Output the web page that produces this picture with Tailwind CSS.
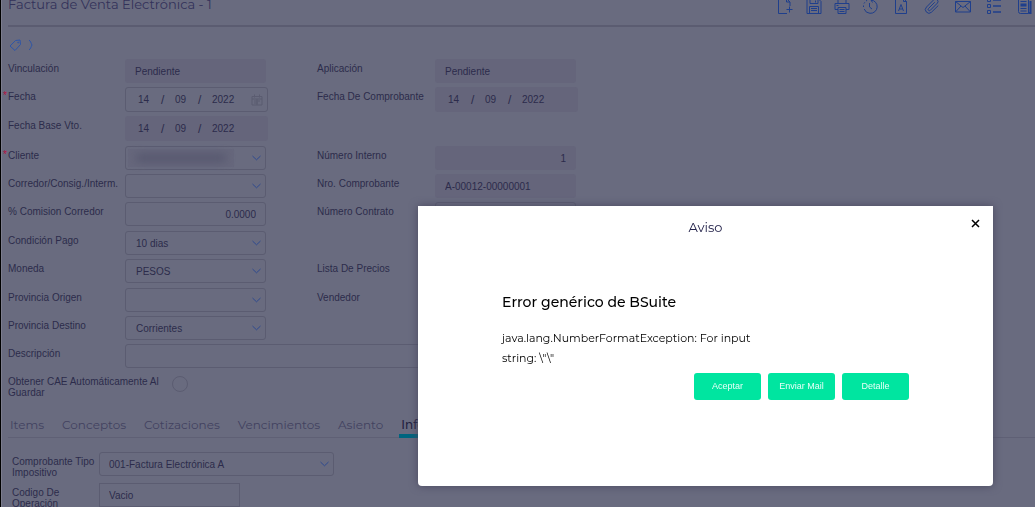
<!doctype html>
<html lang="es">
  <head>
    <meta charset="UTF-8" />
    <meta name="viewport" content="width=device-width, initial-scale=1.0" />
    <title>Factura de Venta Electrónica</title>
    <script src="https://cdn.jsdelivr.net/npm/@tailwindcss/browser@4"></script>
  </head>

  <body class="h-svh overflow-hidden bg-[#696b7f] font-['Liberation_Sans',Arial,sans-serif] text-[10px] text-[#2c2b4b]">
    <div class="min-h-svh border-l border-black">
      <div class="min-h-svh border-l border-[#7c7d8e] pl-[6px]">
        <!-- Header -->
        <header class="-mt-[14px] flex h-[41px] items-center justify-between border-b-2 border-[#5b5c71] pr-[2px]">
          <h1 class="-mt-1 font-[Montserrat,Inter,sans-serif] text-[13px] leading-4 text-[#33325a]">Factura de Venta Electrónica - 1</h1>
          <div class="flex gap-[15px] text-[#1f3f8c]">
            <div class="flex gap-3">
              <button type="button" aria-label="Nuevo">
                <svg class="size-4" viewBox="0 0 16 16" fill="none" stroke="currentColor"><path d="M9 15.500H.5V.5h8l3.500 3.500v4M8.500.5V4H12M11.500 8.500v6M8.500 11.500h6" /></svg>
              </button>
              <button type="button" aria-label="Guardar">
                <svg class="size-4" viewBox="0 0 16 16" fill="none" stroke="currentColor"><path d="M1 1.500h12l2 2v12H1zM4 1.500v4h8v-4M9.500 2.500v2M3.500 15.500v-7h9v7M5 10.500h6M5 12.500h6" /></svg>
              </button>
              <button type="button" aria-label="Imprimir">
                <svg class="size-4" viewBox="0 0 16 16" fill="none" stroke="currentColor"><path d="M4 5.500v-5h8v5M4 11.500H1v-6h14v6h-3M4 9.500h8v6H4zM2.500 7.500h2M5.500 11.500h5M5.500 13.500h5" /></svg>
              </button>
              <button type="button" aria-label="Historial">
                <svg class="size-4" viewBox="0 0 16 16" fill="none" stroke="currentColor"><path d="M9 2a6.500 6.500 0 0 1-1 13.300A6.500 6.500 0 0 1 2.200 11" /><path d="M11.500.5 9 2l1.500 2.500M7.500 5v4l2.500 2M1.500 9V7.500M2 5.500l.8-1.200M4 3l1.200-.8" /></svg>
              </button>
            </div>
            <button type="button" aria-label="Documento">
              <svg class="size-4" viewBox="0 0 16 16" fill="none" stroke="currentColor"><path d="M2.500.5h8l3 3v12h-11zM10.500.5v3h3M5.500 13 8 6.500l2.500 6.500M6.500 11h3" /></svg>
            </button>
            <button type="button" aria-label="Adjuntar">
              <svg class="size-4" viewBox="0 0 16 16" fill="none" stroke="currentColor" stroke-linecap="round"><path d="m10.500 4.500-6 6a1.200 1.200 0 0 0 1.800 1.800l7.200-7.300A2.500 2.500 0 0 0 10 1.500L2.500 9a3.600 3.600 0 0 0 5 5.200L14 7.800" /></svg>
            </button>
            <button type="button" aria-label="Enviar mail">
              <svg class="size-4" viewBox="0 0 16 16" fill="none" stroke="currentColor"><path d="M.5 3.500h15v10.500H.5zM.5 3.500 8 9.500l7.500-6M.5 14 6 8M15.500 14 10 8" /></svg>
            </button>
            <button type="button" aria-label="Lista">
              <svg class="size-4" viewBox="0 0 16 16" fill="none" stroke="currentColor"><path d="M1.500.5h3v3h-3zM1.500 6.500h3v3h-3zM1.500 12.500h3v3h-3z" /><path stroke-width="1.500" d="M7 2h8M7 8h8M7 14h8" /></svg>
            </button>
            <button type="button" aria-label="Novedades">
              <svg class="size-4" viewBox="0 0 16 16" fill="none" stroke="currentColor"><path d="M1.500.5h10v15h-8a2 2 0 0 1-2-2zM3.500 3.500h6M3.500 10.500h6M3.500 13h6" /><path stroke-width="3" d="M3.500 7h6" /><path stroke-width="2" d="M13.500 3v12h-2" /></svg>
            </button>
          </div>
        </header>

        <div class="flex h-8 items-center gap-2 pt-1 text-[#2d55a8]">
          <button type="button" aria-label="Etiqueta">
            <svg class="size-[14px]" viewBox="0 0 14 14" fill="none" stroke="currentColor"><path d="M7.500 2.500 12 2l.5 4.500L7 12.500 2 8z" /><circle cx="10.200" cy="4.500" r=".5" /></svg>
          </button>
          <button type="button" aria-label="Expandir">
            <svg class="-ml-[2px] h-3 w-2" viewBox="0 0 8 12" fill="none" stroke="currentColor"><path d="M1 1c1.500 1 2 3 3 5-1 2-1.500 4-3 5" /></svg>
          </button>
        </div>

        <form class="flex flex-col gap-[5px]">
          <!-- Fechas -->
          <div class="flex flex-col gap-1">
            <div class="grid grid-cols-[117px_141px_51px_118px_141px] items-start">
              <label for="vinculacion" class="pt-1 leading-[11px]">Vinculación</label>
              <input id="vinculacion" value="Pendiente" readonly class="h-6 w-full rounded-[3px] bg-[#65657b] px-[10px]" />
              <label for="aplicacion" class="col-start-4 pt-1 leading-[11px]">Aplicación</label>
              <input id="aplicacion" value="Pendiente" readonly class="h-6 w-full rounded-[3px] bg-[#65657b] px-[10px]" />
            </div>
            <div class="grid grid-cols-[117px_143px_49px_118px_143px] items-start">
              <label for="fecha" class="relative pt-1 leading-[11px]"><span class="absolute top-[3px] -left-[5px] text-[#b3123f]">*</span>Fecha</label>
              <div class="flex h-[25px] items-center gap-[11px] rounded-[3px] border border-[#5b5c71] pl-3">
                <input id="fecha" value="14" class="w-3" />
                <span class="w-[3px] text-[12px]">/</span>
                <input aria-label="Mes" value="09" class="w-3" />
                <span class="w-[3px] text-[12px]">/</span>
                <input aria-label="Año" value="2022" class="w-6" />
                <svg class="ml-1 size-3 text-[#5b5c71]" viewBox="0 0 12 12" fill="none" stroke="currentColor"><path d="M1 2.500h10v8.500H1zM1 5h10M3.500.5v3M8.500.5v3M3 7h6M3 9h4M6 5v6" /></svg>
              </div>
              <label for="fecha-comp" class="col-start-4 pt-1 leading-[11px]">Fecha De Comprobante</label>
              <div class="flex h-[25px] items-center gap-[11px] rounded-[3px] bg-[#65657b] pl-[13px]">
                <input id="fecha-comp" value="14" readonly class="w-3" />
                <span class="w-[3px] text-[12px]">/</span>
                <input aria-label="Mes" value="09" readonly class="w-3" />
                <span class="w-[3px] text-[12px]">/</span>
                <input aria-label="Año" value="2022" readonly class="w-6" />
              </div>
            </div>
            <div class="grid grid-cols-[117px_143px] items-start">
              <label for="fecha-base" class="pt-1 leading-[11px]">Fecha Base Vto.</label>
              <div class="flex h-[25px] items-center gap-[11px] rounded-[3px] bg-[#65657b] pl-[13px]">
                <input id="fecha-base" value="14" readonly class="w-3" />
                <span class="w-[3px] text-[12px]">/</span>
                <input aria-label="Mes" value="09" readonly class="w-3" />
                <span class="w-[3px] text-[12px]">/</span>
                <input aria-label="Año" value="2022" readonly class="w-6" />
              </div>
            </div>
          </div>

          <!-- Cliente y comprobante -->
          <div class="flex flex-col gap-1">
            <div class="grid grid-cols-[117px_141px_51px_118px_141px] items-start">
              <label for="cliente" class="relative pt-1 leading-[11px]"><span class="absolute top-[3px] -left-[5px] text-[#b3123f]">*</span>Cliente</label>
              <div class="relative">
                <select id="cliente" class="h-6 w-full appearance-none rounded-[3px] border border-[#5b5c71] px-[10px]"><option></option></select>
                <div class="pointer-events-none absolute top-[3px] left-[3px] flex h-[18px] w-[106px] items-center bg-[#66677c] pl-2">
                  <div class="h-2 w-[90px] rounded-full bg-[#56576e] blur-xs"></div>
                </div>
                <svg class="pointer-events-none absolute top-[9px] right-[5px] h-[6px] w-[9px] text-[#2f4a8f]" viewBox="0 0 9 6" fill="none" stroke="currentColor"><path d="m.5 1 4 3.800 4-3.800" /></svg>
              </div>
              <label for="nro-interno" class="col-start-4 pt-1 leading-[11px]">Número Interno</label>
              <input id="nro-interno" value="1" readonly class="h-6 w-full rounded-[3px] bg-[#65657b] px-[10px] text-right" />
            </div>
            <div class="grid grid-cols-[117px_141px_51px_118px_141px] items-start">
              <label for="corredor" class="pt-1 leading-[11px] whitespace-nowrap">Corredor/Consig./Interm.</label>
              <div class="relative">
                <select id="corredor" class="h-6 w-full appearance-none rounded-[3px] border border-[#5b5c71] px-[10px]"><option></option></select>
                <svg class="pointer-events-none absolute top-[9px] right-[5px] h-[6px] w-[9px] text-[#2f4a8f]" viewBox="0 0 9 6" fill="none" stroke="currentColor"><path d="m.5 1 4 3.800 4-3.800" /></svg>
              </div>
              <label for="nro-comp" class="col-start-4 pt-1 leading-[11px]">Nro. Comprobante</label>
              <input id="nro-comp" value="A-00012-00000001" readonly class="h-6 w-full rounded-[3px] bg-[#65657b] px-[10px]" />
            </div>
            <div class="grid grid-cols-[117px_141px_51px_118px_141px] items-start">
              <label for="comision" class="pt-1 leading-[11px]">% Comision Corredor</label>
              <input id="comision" value="0.0000" class="h-6 w-full rounded-[3px] border border-[#5b5c71] px-[9px] text-right" />
              <label for="contrato" class="col-start-4 pt-1 leading-[11px]">Número Contrato</label>
              <input id="contrato" class="h-6 w-full rounded-[3px] border border-[#5b5c71] px-[10px]" />
            </div>
          </div>

          <!-- Condiciones -->
          <div class="flex flex-col gap-1">
            <div class="grid grid-cols-[117px_141px] items-start">
              <label for="condicion" class="pt-1 leading-[11px]">Condición Pago</label>
              <div class="relative">
                <select id="condicion" class="h-6 w-full appearance-none rounded-[3px] border border-[#5b5c71] px-[10px]"><option>10 dias</option></select>
                <svg class="pointer-events-none absolute top-[9px] right-[5px] h-[6px] w-[9px] text-[#2f4a8f]" viewBox="0 0 9 6" fill="none" stroke="currentColor"><path d="m.5 1 4 3.800 4-3.800" /></svg>
              </div>
            </div>
            <div class="grid grid-cols-[117px_141px_51px_118px_141px] items-start">
              <label for="moneda" class="pt-1 leading-[11px]">Moneda</label>
              <div class="relative">
                <select id="moneda" class="h-6 w-full appearance-none rounded-[3px] border border-[#5b5c71] px-[10px]"><option>PESOS</option></select>
                <svg class="pointer-events-none absolute top-[9px] right-[5px] h-[6px] w-[9px] text-[#2f4a8f]" viewBox="0 0 9 6" fill="none" stroke="currentColor"><path d="m.5 1 4 3.800 4-3.800" /></svg>
              </div>
              <label for="lista" class="col-start-4 pt-1 leading-[11px]">Lista De Precios</label>
              <select id="lista" class="h-6 w-full appearance-none rounded-[3px] border border-[#5b5c71] px-[10px]"><option></option></select>
            </div>
          </div>

          <!-- Provincias -->
          <div class="flex flex-col gap-1">
            <div class="grid grid-cols-[117px_141px_51px_118px_141px] items-start">
              <label for="origen" class="pt-1 leading-[11px]">Provincia Origen</label>
              <div class="relative">
                <select id="origen" class="h-6 w-full appearance-none rounded-[3px] border border-[#5b5c71] px-[10px]"><option></option></select>
                <svg class="pointer-events-none absolute top-[9px] right-[5px] h-[6px] w-[9px] text-[#2f4a8f]" viewBox="0 0 9 6" fill="none" stroke="currentColor"><path d="m.5 1 4 3.800 4-3.800" /></svg>
              </div>
              <label for="vendedor" class="col-start-4 pt-1 leading-[11px]">Vendedor</label>
              <select id="vendedor" class="h-6 w-full appearance-none rounded-[3px] border border-[#5b5c71] px-[10px]"><option></option></select>
            </div>
            <div class="grid grid-cols-[117px_141px] items-start">
              <label for="destino" class="pt-1 leading-[11px]">Provincia Destino</label>
              <div class="relative">
                <select id="destino" class="h-6 w-full appearance-none rounded-[3px] border border-[#5b5c71] px-[10px]"><option>Corrientes</option></select>
                <svg class="pointer-events-none absolute top-[9px] right-[5px] h-[6px] w-[9px] text-[#2f4a8f]" viewBox="0 0 9 6" fill="none" stroke="currentColor"><path d="m.5 1 4 3.800 4-3.800" /></svg>
              </div>
            </div>
            <div class="grid grid-cols-[117px_451px] items-start">
              <label for="descripcion" class="pt-1 leading-[11px]">Descripción</label>
              <input id="descripcion" class="h-6 w-full rounded-[3px] border border-[#5b5c71] px-[10px]" />
            </div>
            <div class="grid grid-cols-[164px_auto] items-start justify-start pt-1">
              <label for="cae" class="leading-[11px]">Obtener CAE Automáticamente Al<br />Guardar</label>
              <input id="cae" type="checkbox" class="size-4 appearance-none rounded-full border border-[#5b5c71]" />
            </div>
          </div>
        </form>

        <!-- Tabs -->
        <nav class="mt-[18px] flex gap-[18px] border-b border-[#5f6075] px-[2px] font-[Montserrat,Inter,sans-serif] text-[12px] leading-[18px] text-[#42425f]">
          <a href="#" class="pb-[3px]">Items</a>
          <a href="#" class="pb-[3px]">Conceptos</a>
          <a href="#" class="pb-[3px]">Cotizaciones</a>
          <a href="#" class="pb-[3px]">Vencimientos</a>
          <a href="#" class="pb-[3px]">Asiento</a>
          <a href="#" class="-mx-[2px] -mb-px border-b-4 border-[#00657f] px-[2px] font-medium text-[#1f1e40]">Información</a>
        </nav>

        <div class="mt-[14px] flex flex-col gap-[5px] pl-1">
          <div class="grid grid-cols-[87px_235px] items-start">
            <label for="tipo" class="pt-1 leading-[11px]">Comprobante Tipo Impositivo</label>
            <div class="relative">
              <select id="tipo" class="h-6 w-full appearance-none rounded-[3px] border border-[#5b5c71] px-[9px]"><option>001-Factura Electrónica A</option></select>
              <svg class="pointer-events-none absolute top-[9px] right-[5px] h-[6px] w-[9px] text-[#2f4a8f]" viewBox="0 0 9 6" fill="none" stroke="currentColor"><path d="m.5 1 4 3.800 4-3.800" /></svg>
            </div>
          </div>
          <div class="grid grid-cols-[87px_141px] items-start">
            <label for="codigo" class="pt-1 leading-[11px]">Codigo De<br />Operación</label>
            <input id="codigo" value="Vacio" class="h-6 w-full border border-[#5b5c71] px-[9px]" />
          </div>
        </div>
      </div>
    </div>

    <!-- Aviso -->
    <dialog open aria-labelledby="aviso" class="fixed top-[206px] right-[42px] left-auto m-0 min-h-[280px] w-[575px] rounded-b-[4px] bg-white pb-[86px] font-[Montserrat,Inter,sans-serif] text-black shadow-[0_0_8px_#4a4960]">
      <h2 id="aviso" class="pt-3 text-center text-[13px] leading-[18px] text-[#23224a]">Aviso</h2>
      <button type="button" aria-label="Cerrar" class="absolute top-3 right-3 p-px">
        <svg class="size-[9px]" viewBox="0 0 9 9" fill="none" stroke="currentColor" stroke-width="1.500"><path d="m1 1 7 7M8 1 1 8" /></svg>
      </button>
      <div class="px-[84px] pt-14">
        <h3 class="text-[14px] leading-5 font-medium">Error genérico de BSuite</h3>
        <p class="w-[270px] pt-4 text-[11px] leading-5">java.lang.NumberFormatException: For input string: \"\"</p>
        <div class="mt-[5px] flex justify-end gap-[7px] font-['Liberation_Sans',Arial,sans-serif] text-[9px] text-[#e6fff7]">
          <button type="button" class="h-[27px] w-[67px] rounded-[3px] bg-[#00e5a0]">Aceptar</button>
          <button type="button" class="h-[27px] w-[67px] rounded-[3px] bg-[#00e5a0]">Enviar Mail</button>
          <button type="button" class="h-[27px] w-[67px] rounded-[3px] bg-[#00e5a0]">Detalle</button>
        </div>
      </div>
    </dialog>
  </body>
</html>
